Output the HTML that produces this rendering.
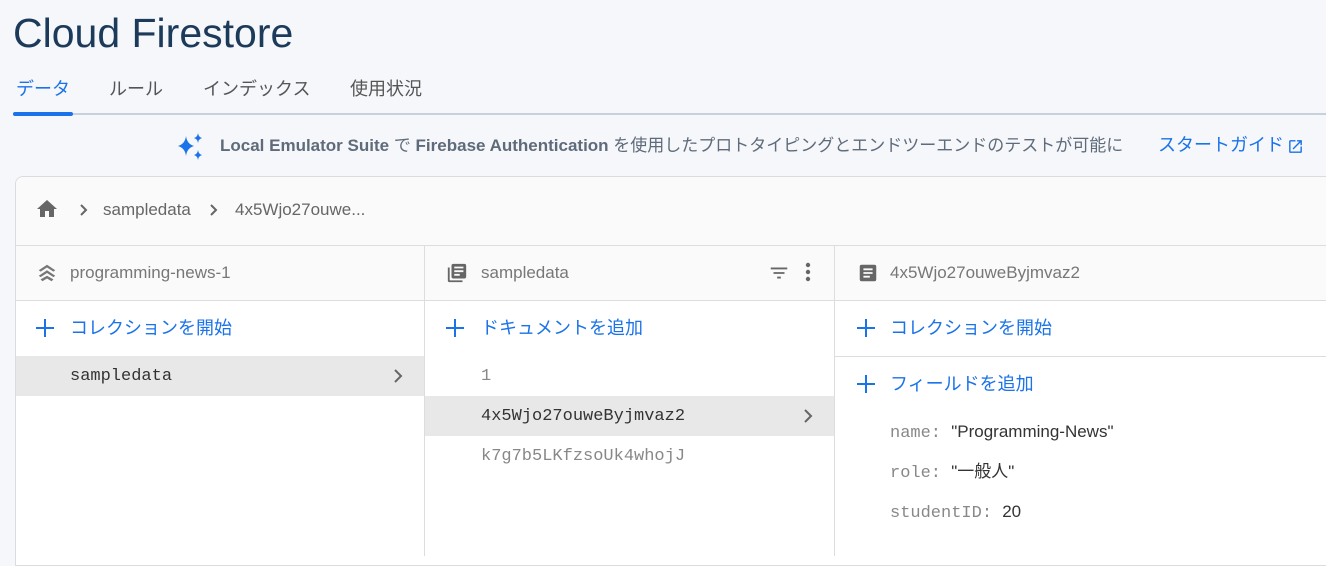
<!DOCTYPE html>
<html><head><meta charset="utf-8"><style>
*{margin:0;padding:0;box-sizing:border-box}
body{width:1326px;height:552px;overflow:hidden;background:#f5f7fa;font-family:"Liberation Sans","Noto Sans CJK JP",sans-serif;position:relative}
.a{position:absolute;white-space:nowrap;line-height:20px}
.mono{font-family:"Liberation Mono","Noto Sans CJK JP",monospace}
.blue{color:#1a73e8}
.plus{position:absolute;width:18px;height:18px}
.plus:before{content:"";position:absolute;left:0;top:8px;width:18px;height:2px;background:#1a73e8}
.plus:after{content:"";position:absolute;left:8px;top:0;width:2px;height:18px;background:#1a73e8}
</style></head><body>
<div class="a" style="left:13px;top:10px;font-size:41px;line-height:46px;color:#1c3a5a;">Cloud Firestore</div>
<div class="a" style="left:16px;top:79px;font-size:18px;color:#1a73e8">データ</div>
<div class="a" style="left:109px;top:79px;font-size:18px;color:#555">ルール</div>
<div class="a" style="left:203px;top:79px;font-size:18px;color:#555">インデックス</div>
<div class="a" style="left:350px;top:79px;font-size:18px;color:#555">使用状況</div>
<div class="a" style="left:13px;top:113px;width:1313px;height:2px;background:#c6d1dd"></div>
<div class="a" style="left:13px;top:112px;width:60px;height:4px;background:#1a73e8;border-radius:2px"></div>
<svg class="a" style="left:176px;top:132px" width="30" height="30" viewBox="0 0 30 30"><path fill="#1a73e8" d="M10 4 Q11 12 18 14 Q11 16 10 24 Q9 16 2 14 Q9 12 10 4Z M22 1 Q22.5 5 26 6 Q22.5 7 22 11 Q21.5 7 18 6 Q21.5 5 22 1Z M22 18 Q22.5 22 26 23 Q22.5 24 22 28 Q21.5 24 18 23 Q21.5 22 22 18Z"/></svg>
<div class="a" style="left:220px;top:136px;font-size:17px;color:#5f6b7a"><b>Local Emulator Suite</b> で <b>Firebase Authentication</b> を使用したプロトタイピングとエンドツーエンドのテストが可能に</div>
<div class="a blue" style="left:1158px;top:135px;font-size:18px">スタートガイド</div>
<svg class="a" style="left:1287px;top:138px" width="17" height="17" viewBox="0 0 24 24"><path fill="#1a73e8" d="M19 19H5V5h7V3H5a2 2 0 00-2 2v14a2 2 0 002 2h14a2 2 0 002-2v-7h-2v7zM14 3v2h3.6l-9.8 9.8 1.4 1.4L19 6.4V10h2V3h-7z"/></svg>
<div class="a" style="left:15px;top:176px;width:1320px;height:390px;background:#fff;border:1px solid #dadce0;border-radius:8px 0 0 0"></div>
<div class="a" style="left:16px;top:177px;width:1310px;height:68px;background:#fafafa;border-radius:8px 0 0 0"></div>
<svg class="a" style="left:35px;top:197px" width="24" height="24" viewBox="0 0 24 24"><path fill="#666" d="M10 20v-6h4v6h5v-8h3L12 3 2 12h3v8z"/></svg>
<svg class="a" style="left:78px;top:202px" width="12" height="16" viewBox="0 0 12 16"><path d="M3 3l5 5-5 5" stroke="#666" stroke-width="2" fill="none"/></svg>
<div class="a" style="left:103px;top:200px;font-size:17px;color:#666">sampledata</div>
<svg class="a" style="left:208px;top:202px" width="12" height="16" viewBox="0 0 12 16"><path d="M3 3l5 5-5 5" stroke="#666" stroke-width="2" fill="none"/></svg>
<div class="a" style="left:235px;top:200px;font-size:17px;color:#666">4x5Wjo27ouwe...</div>
<div class="a" style="left:16px;top:245px;width:1310px;height:1px;background:#ddd"></div>
<div class="a" style="left:16px;top:246px;width:1310px;height:54px;background:#fafafa"></div>
<div class="a" style="left:16px;top:300px;width:1310px;height:1px;background:#ddd"></div>
<div class="a" style="left:424px;top:246px;width:1px;height:310px;background:#ddd"></div>
<div class="a" style="left:834px;top:246px;width:1px;height:310px;background:#ddd"></div>
<svg class="a" style="left:36px;top:262px" width="22" height="22" viewBox="0 0 24 24"><path fill="#777" d="M12 3 3 9l2 1.5L12 6l7 4.5L21 9zM12 9l-9 6 2 1.5 7-4.5 7 4.5 2-1.5zM5 19l2 2 5-3 5 3 2-2-7-4z"/></svg>
<div class="a" style="left:70px;top:263px;font-size:17px;color:#777">programming-news-1</div>
<svg class="a" style="left:446px;top:262px" width="22" height="22" viewBox="0 0 24 24"><path fill="#666" d="M4 6H2v14a2 2 0 002 2h14v-2H4V6zm16-4H8a2 2 0 00-2 2v12a2 2 0 002 2h12a2 2 0 002-2V4a2 2 0 00-2-2zm-1 9H9V9h10v2zm-4 4H9v-2h6v2zm4-8H9V5h10v2z"/></svg>
<div class="a" style="left:481px;top:263px;font-size:17px;color:#777">sampledata</div>
<svg class="a" style="left:767px;top:262px" width="24" height="22" viewBox="0 0 24 24"><path fill="#666" d="M3 6h18v2H3zM6 11h12v2H6zM10 16h4v2h-4z"/></svg>
<svg class="a" style="left:802px;top:260px" width="12" height="24" viewBox="0 0 12 24"><circle cx="6" cy="5" r="2.2" fill="#666"/><circle cx="6" cy="12" r="2.2" fill="#666"/><circle cx="6" cy="19" r="2.2" fill="#666"/></svg>
<svg class="a" style="left:857px;top:262px" width="22" height="22" viewBox="0 0 24 24"><path fill="#666" d="M19 3H5a2 2 0 00-2 2v14a2 2 0 002 2h14a2 2 0 002-2V5a2 2 0 00-2-2zm-5 14H7v-2h7v2zm3-4H7v-2h10v2zm0-4H7V7h10v2z"/></svg>
<div class="a" style="left:890px;top:263px;font-size:17px;color:#777">4x5Wjo27ouweByjmvaz2</div>
<div class="plus" style="left:36px;top:319px"></div>
<div class="a blue" style="left:70px;top:318px;font-size:18px">コレクションを開始</div>
<div class="a" style="left:16px;top:356px;width:408px;height:40px;background:#e8e8e8"></div>
<div class="a mono" style="left:70px;top:367px;font-size:17px;color:#333">sampledata</div>
<svg class="a" style="left:392px;top:368px" width="12" height="16" viewBox="0 0 12 16"><path d="M3 2l6 6-6 6" stroke="#666" stroke-width="2" fill="none"/></svg>
<div class="plus" style="left:446px;top:319px"></div>
<div class="a blue" style="left:481px;top:318px;font-size:18px">ドキュメントを追加</div>
<div class="a mono" style="left:481px;top:367px;font-size:17px;color:#888">1</div>
<div class="a" style="left:425px;top:396px;width:409px;height:40px;background:#e8e8e8"></div>
<div class="a mono" style="left:481px;top:407px;font-size:17px;color:#333">4x5Wjo27ouweByjmvaz2</div>
<svg class="a" style="left:802px;top:408px" width="12" height="16" viewBox="0 0 12 16"><path d="M3 2l6 6-6 6" stroke="#666" stroke-width="2" fill="none"/></svg>
<div class="a mono" style="left:481px;top:447px;font-size:17px;color:#888">k7g7b5LKfzsoUk4whojJ</div>
<div class="plus" style="left:857px;top:319px"></div>
<div class="a blue" style="left:890px;top:318px;font-size:18px">コレクションを開始</div>
<div class="a" style="left:835px;top:356px;width:491px;height:1px;background:#ddd"></div>
<div class="plus" style="left:857px;top:375px"></div>
<div class="a blue" style="left:890px;top:374px;font-size:18px">フィールドを追加</div>
<div class="a" style="left:890px;top:422px;font-size:17px;color:#333"><span class="mono" style="color:#888">name: </span>"Programming-News"</div>
<div class="a" style="left:890px;top:462px;font-size:17px;color:#333"><span class="mono" style="color:#888">role: </span>"一般人"</div>
<div class="a" style="left:890px;top:502px;font-size:17px;color:#333"><span class="mono" style="color:#888">studentID: </span>20</div>
</body></html>
